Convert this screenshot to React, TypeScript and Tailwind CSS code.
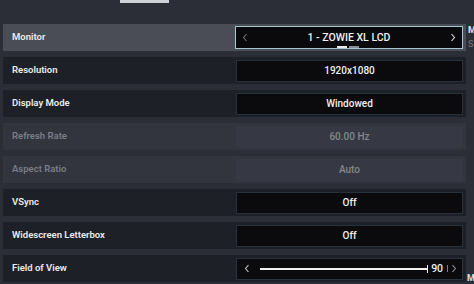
import React from "react";

type Row = { label: string; value: string; kind: "selected" | "normal" | "disabled" | "slider" };

const rows: Row[] = [
  { label: "Monitor", value: "1 - ZOWIE XL LCD", kind: "selected" },
  { label: "Resolution", value: "1920x1080", kind: "normal" },
  { label: "Display Mode", value: "Windowed", kind: "normal" },
  { label: "Refresh Rate", value: "60.00 Hz", kind: "disabled" },
  { label: "Aspect Ratio", value: "Auto", kind: "disabled" },
  { label: "VSync", value: "Off", kind: "normal" },
  { label: "Widescreen Letterbox", value: "Off", kind: "normal" },
  { label: "Field of View", value: "90", kind: "slider" },
];

function Chevron({ dir, className }: { dir: "l" | "r"; className: string }) {
  return (
    <svg width="6" height="9" viewBox="0 0 6 9" className={className}>
      {dir === "l" ? (
        <path d="M4.5 1 L1.5 4.5 L4.5 8" fill="none" stroke="currentColor" strokeWidth="1.1" />
      ) : (
        <path d="M1.5 1 L4.5 4.5 L1.5 8" fill="none" stroke="currentColor" strokeWidth="1.1" />
      )}
    </svg>
  );
}

function Control({ row }: { row: Row }) {
  if (row.kind === "selected") {
    return (
      <div className="relative flex h-[23px] w-[228px] items-center justify-between border-[1.5px] border-[#a7c6cf] bg-[#0a0a0c] px-[6px]">
        <Chevron dir="l" className="text-[#6d7077]" />
        <span className="text-[10.5px] font-medium text-[#f2f2f2]">{row.value}</span>
        <Chevron dir="r" className="text-[#d8d8d8]" />
        <div className="absolute bottom-[0px] left-[101px] flex gap-[2px]">
          <div className="h-[2px] w-[10px] bg-[#e8e8e8]" />
          <div className="h-[2px] w-[10px] bg-[#8a8d94]" />
        </div>
      </div>
    );
  }
  if (row.kind === "disabled") {
    return (
      <div className="flex h-[22px] w-[227px] items-center justify-center bg-[#363943]">
        <span className="text-[10px] font-medium text-[#85878e]">{row.value}</span>
      </div>
    );
  }
  if (row.kind === "slider") {
    return (
      <div className="flex h-[22px] w-[227px] items-center border border-[#27343d] bg-[#0b0b0d] pl-[7px] pr-[5px]">
        <Chevron dir="l" className="text-[#bdbdbd]" />
        <div className="ml-[10px] h-[2px] w-[169px] bg-[#f0f0f0]" />
        <div className="h-[8px] w-[1.5px] bg-[#f0f0f0]" />
        <span className="ml-[3px] text-[10.5px] font-medium text-[#f0f0f0]">{row.value}</span>
        <div className="ml-[4px] h-[7px] w-[1px] bg-[#7a7d83]" />
        <Chevron dir="r" className="ml-[3px] text-[#8a8c92]" />
      </div>
    );
  }
  return (
    <div className="flex h-[22px] w-[227px] items-center justify-center border border-[#25323b] bg-[#0b0b0d]">
      <span className="text-[10px] font-medium text-[#f0f0f0]">{row.value}</span>
    </div>
  );
}

export default function App() {
  return (
    <div
      className="relative h-[284px] w-[474px] overflow-hidden bg-[#2c2e37]"
      style={{ fontFamily: "Roboto, 'Liberation Sans', sans-serif" }}
    >
      <div className="ml-[120px] h-[3px] w-[49px] bg-[#cfd1d6]" />
      <div className="mt-[21px] flex flex-col gap-[6px] pl-[3px]">
        {rows.map((r) => {
          const bg =
            r.kind === "selected" ? "bg-[#4a4d56]" : r.kind === "disabled" ? "bg-[#32353e]" : "bg-[#1e2027]";
          const txt = r.kind === "disabled" ? "text-[#7b7e86]" : "text-[#ececec]";
          return (
            <div key={r.label} className={`flex h-[27px] w-[463px] items-center justify-between pl-[9px] pr-[3px] ${bg}`}>
              <span className={`text-[9.5px] font-semibold ${txt}`}>{r.label}</span>
              <Control row={r} />
            </div>
          );
        })}
      </div>
      <div className="absolute left-[468px] top-[24px] text-[9px] font-bold text-[#e0e0e0]">M</div>
      <div className="absolute left-[468px] top-[38px] text-[9px] font-medium text-[#6a6d74]">S</div>
      <div className="absolute left-[467px] top-[272px] text-[9px] font-bold text-[#e0e0e0]">M</div>
    </div>
  );
}
